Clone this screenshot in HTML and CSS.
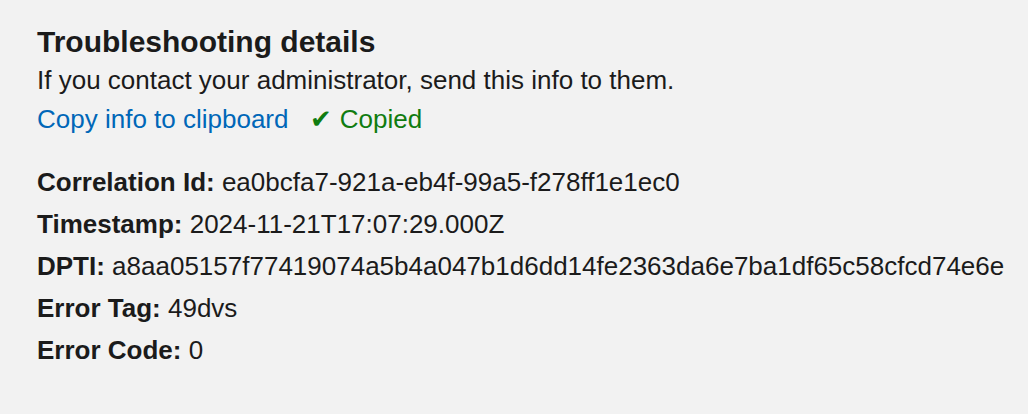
FILE: index.html
```html
<!DOCTYPE html>
<html lang="en">
<head>
  <meta charset="UTF-8">
  <meta name="viewport" content="width=device-width, initial-scale=1.0">
  <title>Troubleshooting details</title>
  <link rel="stylesheet" href="styles.css">
</head>
<body>
  <div class="details">
    <h2>Troubleshooting details</h2>
    <p class="hint">If you contact your administrator, send this info to them.</p>
    <div class="copy-row">
      <a href="#" class="copy-link">Copy info to clipboard</a>
      <span class="copied">&#10004; Copied</span>
    </div>
    <div class="info">
      <p><b>Correlation Id:</b> ea0bcfa7-921a-eb4f-99a5-f278ff1e1ec0</p>
      <p><b>Timestamp:</b> 2024-11-21T17:07:29.000Z</p>
      <p><b>DPTI:</b> a8aa05157f77419074a5b4a047b1d6dd14fe2363da6e7ba1df65c58cfcd74e6e</p>
      <p><b>Error Tag:</b> 49dvs</p>
      <p><b>Error Code:</b> 0</p>
    </div>
  </div>
</body>
</html>
```

FILE: styles.css
```css
body {
  margin: 0;
  background: #f2f2f2;
  font-family: "Liberation Sans", Arial, sans-serif;
  color: #1b1b1b;
}

.details {
  padding: 24px 0 24px 37px;
}

h2 {
  margin: 0;
  font-size: 30px;
  line-height: 36px;
  font-weight: bold;
}

.hint {
  margin: 1px 0 0;
  font-size: 26px;
  line-height: 38px;
}

.copy-row {
  display: flex;
  gap: 22px;
  margin-top: 1px;
  font-size: 26px;
  line-height: 38px;
}

.copy-link {
  color: #0067b8;
  text-decoration: none;
}

.copied {
  color: #107c10;
}

.info {
  margin-top: 23px;
}

.info p {
  margin: 0;
  font-size: 26px;
  line-height: 42px;
  white-space: nowrap;
}
```
